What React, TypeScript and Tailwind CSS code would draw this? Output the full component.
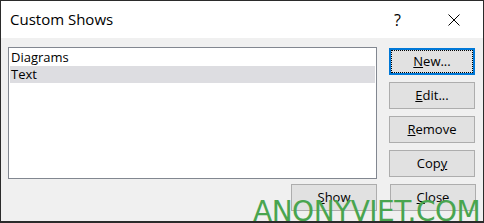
import React from "react";

function Btn({ children, focused = false }: { children: React.ReactNode; focused?: boolean }) {
  if (focused) {
    return (
      <button className="h-[27px] w-[86px] border-2 border-[#0078d7] bg-[#e1e1e1] p-0 text-[13px] text-black">
        <span className="flex h-full w-full items-center justify-center outline-1 outline-dotted outline-black -outline-offset-1">
          {children}
        </span>
      </button>
    );
  }
  return (
    <button className="flex h-[27px] w-[86px] items-center justify-center border border-[#adadad] bg-[#e1e1e1] text-[13px] text-black">
      {children}
    </button>
  );
}

export default function App() {
  return (
    <div
      className="relative h-[223px] w-[484px] overflow-hidden border border-b-2 border-[#2b2b2b] bg-[#f0f0f0]"
      style={{ fontFamily: '"Open Sans", "Noto Sans", sans-serif' }}
    >
      {/* title bar */}
      <div className="flex h-[37px] items-center bg-white pl-[9px]">
        <span className="text-[15px] text-black">Custom Shows</span>
        <span className="ml-auto text-[16px] text-black">?</span>
        <svg className="ml-[47px] mr-[23px]" width="12" height="12" viewBox="0 0 12 12">
          <path d="M0.5 0.5 L11.5 11.5 M11.5 0.5 L0.5 11.5" stroke="#000" strokeWidth="1" />
        </svg>
      </div>

      {/* body */}
      <div className="flex gap-[12px] pl-[7px] pt-[9px]">
        <div className="h-[132px] w-[369px] border border-[#828790] bg-white p-px text-[13px] leading-[17px] text-black">
          <div className="pl-px">Diagrams</div>
          <div className="bg-[#dddde1] pl-px">Text</div>
        </div>
        <div className="mt-px flex flex-col gap-[7px]">
          <Btn focused>
            <u>N</u>ew...
          </Btn>
          <Btn>
            <u>E</u>dit...
          </Btn>
          <Btn>
            <u>R</u>emove
          </Btn>
          <Btn>
            Cop<u>y</u>
          </Btn>
        </div>
      </div>

      <div className="mt-[5px] flex justify-end gap-[13px] pr-[7px]">
        <Btn>
          <u>S</u>how
        </Btn>
        <Btn>
          <u>C</u>lose
        </Btn>
      </div>

      {/* watermark */}
      <div
        className="pointer-events-none absolute left-[252px] top-[197px] whitespace-nowrap text-[28px] leading-none tracking-[-0.5px] text-[#49a54f]"
        style={{ fontFamily: '"DejaVu Sans", sans-serif' }}
      >
        ANONYVIET.COM
      </div>
    </div>
  );
}
